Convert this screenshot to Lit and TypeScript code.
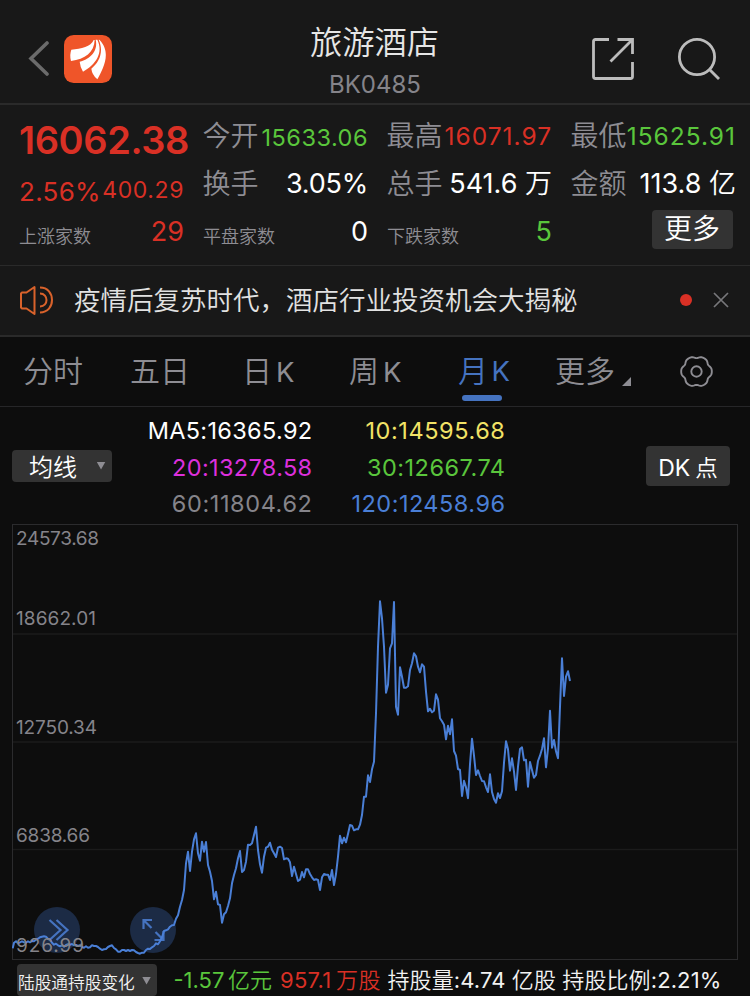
import { LitElement, html, css, svg } from "lit";
import { customElement } from "lit/decorators.js";

/* Monthly closes, one sample every 2px. Offsets are thirds of a pixel below each base line. */
const EARLY_BASE = 800;
const EARLY = [
  428, 424, 430, 427, 424, 427, 428, 424, 427, 423, 424, 419, 416, 412, 410, 409, 410, 417, 419, 428, 434, 431, 436,
  439, 436, 440, 435, 433, 434, 432, 436, 435, 438, 436, 441, 443, 439, 443, 442, 436, 438, 438, 441, 446, 450, 448,
  447, 441, 438, 436, 444, 448, 455, 455, 450, 450, 453, 450, 453, 450, 451, 456, 459, 461, 458, 458, 450, 446, 447,
  442, 438, 430, 433, 424, 412, 393, 391, 388, 380, 376, 375, 356, 346, 320, 300, 270, 190, 155, 213, 155, 118, 100,
  160, 182, 125, 155, 126, 195, 215, 243, 298, 275, 313, 315, 368, 343, 337, 318, 295, 250, 225, 205, 175, 153, 216,
  210, 185, 134, 135, 130, 105, 80, 150, 193, 218, 170, 143, 140, 128, 149, 160, 171, 143, 140, 144, 178, 175, 176,
  187, 228, 200, 222, 243, 239, 216, 232, 208, 208, 222, 232, 240, 238, 240, 270, 232, 222, 224, 224, 240, 210, 255,
  222, 170, 107, 130, 113, 127, 102, 75, 77, 91, 88, 88, 74, 45,
];
const LATE_BASE = 580;
const LATE = [
  650, 650, 586, 606, 568, 545, 400, 200, 64, 115, 200, 338, 314, 205, 190, 66, 380, 404, 262, 290, 323, 323, 319, 270,
  250, 220, 229, 260, 277, 253, 260, 335, 394, 386, 397, 392, 343, 359, 415, 424, 434, 478, 437, 463, 418, 513, 527,
  567, 570, 648, 602, 622, 655, 553, 476, 527, 585, 571, 588, 603, 604, 622, 636, 583, 636, 657, 668, 640, 654, 634,
  548, 484, 508, 572, 535, 575, 630, 560, 507, 502, 541, 539, 620, 546, 570, 593, 585, 543, 527, 507, 475, 562, 505,
  392, 503, 480, 514, 535, 380, 235, 348, 290, 274, 303,
];
const LINE = [
  "12.7,948.3",
  ...[...EARLY.map((v) => EARLY_BASE + v / 3), ...LATE.map((v) => LATE_BASE + v / 3)].map(
    (y, i) => `${14 + i * 2},${y.toFixed(1)}`
  ),
].join(" ");

const AXIS: [string, number, number][] = [
  ["24573.68", 545, 83],
  ["18662.01", 625, 80],
  ["12750.34", 733.5, 81],
  ["6838.66", 841.5, 74],
  ["926.99", 952, 68],
];

/* Six-lobed outline of the settings icon */
const GEAR = (() => {
  const pts: string[] = [];
  for (let i = 0; i < 120; i++) {
    const a = (i / 120) * Math.PI * 2;
    const r = 15.3 - 1.9 * Math.pow((1 - Math.cos(a * 6)) / 2, 2);
    pts.push(`${(16.5 + r * Math.cos(a)).toFixed(2)},${(16.5 + r * Math.sin(a)).toFixed(2)}`);
  }
  return pts.join(" ");
})();

@customElement("quote-header")
class QuoteHeader extends LitElement {
  static styles = css`
    :host {
      display: flex;
      height: 103px;
      border-bottom: 2px solid #2a2a2a;
    }
    .side {
      width: 188px;
      display: flex;
      align-items: flex-start;
      box-sizing: border-box;
    }
    .left {
      padding: 35px 0 0 28px;
      gap: 15px;
    }
    .right {
      padding: 36px 0 0 28px;
      gap: 41px;
    }
    .mid {
      flex: 1;
      text-align: center;
      padding-top: 20px;
    }
    .name {
      font-size: 32.3px;
      line-height: 46px;
      color: #e6e6e6;
      font-weight: 350;
      margin-left: -1px;
    }
    .code {
      font-size: 24px;
      line-height: 37px;
      color: #85848a;
    }
    svg {
      display: block;
    }
  `;
  render() {
    return html`
      <div class="side left">
        <svg width="21" height="48" viewBox="0 0 21 48">
          <path d="M19 8 3 23.500 19 39" fill="none" stroke="#6b6b6b" stroke-width="3.600" stroke-linecap="round" />
        </svg>
        <svg width="48" height="48" viewBox="192 105 144 144">
          <rect x="192" y="105" width="144" height="144" rx="29" fill="#ef5529" />
          <g fill="#fff">
            <path d="M281 120C273 140 244 147 214 149Q208 165 213 183C255 178 283 157 284 120Z" />
            <path d="M287 119C295 153 271 177 239 185Q240 199 249 215C288 193 311 158 292 119Z" />
            <path d="M296 119C312 153 299 187 274 206Q276 224 292 238C308 208 337 158 298 119Z" />
          </g>
        </svg>
      </div>
      <div class="mid">
        <div class="name">旅游酒店</div>
        <div class="code">BK0485</div>
      </div>
      <div class="side right">
        <svg width="46" height="46" viewBox="0 0 46 46" fill="none" stroke="#bcbcbc" stroke-width="2.800">
          <path d="M19 3.500H5.500Q3.500 3.500 3.500 5.500V40.500Q3.500 42.500 5.500 42.500H40.500Q42.500 42.500 42.500 40.500V26" />
          <path d="M27.500 3.500H42.500V18M42 4 20.500 25.500" />
        </svg>
        <svg width="46" height="46" viewBox="0 0 46 46" fill="none" stroke="#bcbcbc" stroke-width="2.800">
          <circle cx="20" cy="21" r="17.600" />
          <path d="M32.500 33.500 42 43" />
        </svg>
      </div>
    `;
  }
}

@customElement("quote-summary")
class QuoteSummary extends LitElement {
  static styles = css`
    :host {
      display: grid;
      grid-template-columns: repeat(4, 165px);
      grid-template-rows: 55px 41px 55px;
      column-gap: 19px;
      padding: 3px 0 4px 19px;
      height: 153px;
      border-bottom: 1px solid #2a2a2a;
      white-space: nowrap;
    }
    .cell {
      display: flex;
      justify-content: space-between;
      align-items: center;
      line-height: 40px;
      font-size: 27px;
      color: #fff;
    }
    .lab {
      font-size: 28px;
      color: #8e8d93;
      font-weight: 350;
      margin-left: -0.5px;
    }
    .small {
      font-size: 18px;
      padding-top: 11px;
      margin-left: 0;
    }
    .price {
      font-size: 38px;
      font-weight: 600;
      letter-spacing: -0.4px;
      padding-top: 8px;
    }
    .open {
      font-size: 23.5px;
      letter-spacing: 0.5px;
      padding-top: 5px;
    }
    .val {
      font-size: 24.5px;
      letter-spacing: 1px;
    }
    .turn {
      letter-spacing: -0.2px;
    }
    .pct {
      font-size: 26px;
      letter-spacing: 0.3px;
      padding-top: 16px;
    }
    .chg {
      font-size: 23px;
      letter-spacing: 0.6px;
      padding-top: 12px;
    }
    .unit {
      font-weight: 350;
    }
    .red {
      color: #d93025;
    }
    .green {
      color: #5ac63c;
    }
    .more {
      justify-self: end;
      width: 81px;
      height: 39px;
      box-sizing: border-box;
      border-radius: 4px;
      background: #333;
      color: #fff;
      font-size: 28px;
      font-weight: 350;
      line-height: 38px;
      text-align: center;
      text-indent: -1px;
      margin: 6px 3px 0 0;
    }
  `;
  render() {
    return html`
      <div class="cell"><span class="price red">16062.38</span></div>
      <div class="cell"><span class="lab">今开</span><span class="open green">15633.06</span></div>
      <div class="cell"><span class="lab">最高</span><span class="val red">16071.97</span></div>
      <div class="cell"><span class="lab">最低</span><span class="val green">15625.91</span></div>
      <div class="cell"><span class="pct red">2.56%</span><span class="chg red">400.29</span></div>
      <div class="cell"><span class="lab">换手</span><span class="turn">3.05%</span></div>
      <div class="cell"><span class="lab">总手</span><span>541.6 <span class="unit">万</span></span></div>
      <div class="cell"><span class="lab">金额</span><span>113.8 <span class="unit">亿</span></span></div>
      <div class="cell"><span class="lab small">上涨家数</span><span class="red">29</span></div>
      <div class="cell"><span class="lab small">平盘家数</span><span>0</span></div>
      <div class="cell"><span class="lab small">下跌家数</span><span class="green">5</span></div>
      <div class="more">更多</div>
    `;
  }
}

@customElement("news-bar")
class NewsBar extends LitElement {
  static styles = css`
    :host {
      display: flex;
      align-items: center;
      height: 67px;
      border-bottom: 2px solid #2a2a2a;
      padding: 0 20px 2px 18px;
    }
    .text {
      flex: 1;
      margin-left: 20px;
      font-size: 26.5px;
      line-height: 40px;
      color: #e2e2e2;
      font-weight: 350;
      white-space: nowrap;
    }
    .dot {
      width: 12px;
      height: 12px;
      border-radius: 50%;
      background: #d93025;
      margin-right: 20px;
    }
  `;
  render() {
    return html`
      <svg width="36" height="32" viewBox="0 0 36 32" fill="none" stroke="#d9622b" stroke-width="2">
        <path d="M3 9.500 4 8.500H8.500L16.500 3V30L8.500 24.500H4L3 23.500Z" stroke-linejoin="round" />
        <path d="M22 3.500C30 3.500 34 9.500 34 16S30 28.500 22 28.500M22 9.500C26.500 9.500 28.500 13 28.500 16S26.500 22.500 22 22.500" />
      </svg>
      <span class="text">疫情后复苏时代，酒店行业投资机会大揭秘</span>
      <span class="dot"></span>
      <svg width="18" height="18" viewBox="0 0 18 18" stroke="#77777a" stroke-width="1.700">
        <path d="M2 2 16 16M16 2 2 16" />
      </svg>
    `;
  }
}

@customElement("period-tabs")
class PeriodTabs extends LitElement {
  static styles = css`
    :host {
      display: grid;
      grid-template-columns: 107px 112px 107px 109px 97px 125px 34px;
      padding-left: 23px;
      height: 69px;
      border-bottom: 1px solid #262628;
      background: #0d0d0d;
      color: #8e8d93;
      font-size: 30px;
      line-height: 68px;
      font-weight: 350;
      white-space: nowrap;
    }
    .k {
      margin-left: 4px;
      font-size: 27.5px;
      font-weight: 400;
    }
    .active {
      display: flex;
      position: relative;
      color: #4573c0;
    }
    .active .k {
      margin-left: 3.5px;
    }
    .bar {
      position: absolute;
      left: 4px;
      bottom: 5px;
      width: 40px;
      height: 6px;
      border-radius: 3px;
      background: #4573c0;
    }
    .more {
      display: flex;
    }
    .corner {
      width: 9px;
      height: 9px;
      background: #8e8d93;
      clip-path: polygon(100% 0, 100% 100%, 0 100%);
      margin: 40px 0 0 7px;
    }
    .gear {
      margin-top: 17.5px;
    }
  `;
  render() {
    return html`
      <span>分时</span>
      <span>五日</span>
      <span>日<span class="k">K</span></span>
      <span>周<span class="k">K</span></span>
      <span class="active">月<span class="k">K</span><i class="bar"></i></span>
      <span class="more">更多<i class="corner"></i></span>
      <svg class="gear" width="33" height="33" viewBox="0 0 33 33" fill="none" stroke="#8e8d93" stroke-width="1.900">
        <polygon points=${GEAR} stroke-linejoin="round" />
        <circle cx="16.500" cy="16.500" r="5.200" />
      </svg>
    `;
  }
}

@customElement("ma-panel")
class MaPanel extends LitElement {
  static styles = css`
    :host {
      display: grid;
      grid-template-columns: 100px 200px 193px 1fr;
      padding: 0 20px 0 12px;
      height: 117px;
      align-items: center;
      background: #0d0d0d;
    }
    .col {
      text-align: right;
      font-size: 23.5px;
      line-height: 36.5px;
      padding-top: 5px;
      margin-right: -0.5px;
    }
    .btn {
      display: flex;
      align-items: center;
      justify-content: space-between;
      box-sizing: border-box;
      border-radius: 4px;
      background: #333;
      color: #fff;
      font-size: 24px;
      white-space: nowrap;
    }
    .cjk {
      font-weight: 350;
    }
    .select {
      height: 32px;
      padding: 0 6.5px 0 17px;
    }
    .dk {
      justify-self: end;
      width: 84px;
      height: 40px;
      justify-content: center;
      font-size: 23px;
      word-spacing: -1.5px;
    }
    .dk .cjk {
      font-size: 22.5px;
    }
    .tri {
      width: 9px;
      height: 8px;
      background: #8e8d93;
      clip-path: polygon(0 0, 100% 0, 50% 100%);
    }
    .white {
      color: #fff;
      letter-spacing: 0.33px;
    }
    .yellow {
      color: #f2e266;
      letter-spacing: 0.58px;
    }
    .pink {
      color: #dc30dc;
      letter-spacing: 0.35px;
    }
    .green {
      color: #5ac63c;
      letter-spacing: 0.5px;
    }
    .grey {
      color: #85848a;
      letter-spacing: 0.6px;
    }
    .blue {
      color: #4a7fd6;
      letter-spacing: 0.48px;
    }
  `;
  render() {
    return html`
      <div class="btn select"><span class="cjk">均线</span><i class="tri"></i></div>
      <div class="col">
        <div class="white">MA5:16365.92</div>
        <div class="pink">20:13278.58</div>
        <div class="grey">60:11804.62</div>
      </div>
      <div class="col">
        <div class="yellow">10:14595.68</div>
        <div class="green">30:12667.74</div>
        <div class="blue">120:12458.96</div>
      </div>
      <div class="btn dk"><span>DK <span class="cjk">点</span></span></div>
    `;
  }
}

@customElement("price-chart")
class PriceChart extends LitElement {
  static styles = css`
    :host {
      display: block;
      background: #0d0d0d;
      height: 436px;
      padding-left: 12px;
    }
    svg {
      display: block;
    }
    .axis {
      font: 19px Inter, sans-serif;
      fill: #85848a;
    }
    .line {
      fill: none;
      stroke: #4a7fd6;
      stroke-width: 2;
      stroke-linejoin: round;
    }
    .tool {
      fill: #1c2b45;
    }
    .glyph {
      fill: none;
      stroke: #4573c0;
      stroke-width: 2.2;
    }
  `;
  render() {
    return html`
      <svg width="726" height="436" viewBox="12 524 726 436">
        <rect x="12.500" y="524.500" width="725" height="435" fill="none" stroke="#2b2b2d" />
        <path d="M13 634H737M13 742H737M13 849.500H737" stroke="#1b1b1b" stroke-width="1.500" />
        <circle class="tool" cx="57" cy="930" r="23" />
        <circle class="tool" cx="153" cy="930" r="23" />
        <path class="glyph" d="M49.500 920 60.500 930 49.500 940M56.500 920 67.500 930 56.500 940" />
        <path class="glyph" d="M143.500 929V920H152M143.500 920 151.500 928M155.500 932 163.500 940M154.500 940H163.500V931" />
        <polyline class="line" points=${LINE} />
        ${AXIS.map(
          ([label, y, w]) => svg`<text class="axis" x="16" y=${y} textLength=${w}>${label}</text>`
        )}
      </svg>
    `;
  }
}

@customElement("holding-bar")
class HoldingBar extends LitElement {
  static styles = css`
    :host {
      display: flex;
      height: 36px;
      padding-left: 17px;
      align-items: flex-start;
      background: #0d0d0d;
      white-space: nowrap;
      font-size: 22px;
      line-height: 41px;
      color: #f2f2f2;
      overflow: hidden;
    }
    .select {
      display: flex;
      align-items: center;
      justify-content: space-between;
      box-sizing: border-box;
      width: 140px;
      height: 32px;
      margin: 4px 16.5px 0 0;
      padding: 6px 6px 0 1px;
      border-radius: 4px;
      background: #333;
      font-size: 16.7px;
      line-height: 30px;
    }
    .tri {
      width: 9px;
      height: 8px;
      margin-bottom: 5px;
      background: #8e8d93;
      clip-path: polygon(0 0, 100% 0, 50% 100%);
    }
    .cjk {
      font-weight: 350;
    }
    .green {
      width: 106.5px;
      color: #5ac63c;
      word-spacing: -2.5px;
    }
    .red {
      width: 107.5px;
      color: #d93025;
      letter-spacing: 0.3px;
      word-spacing: -2px;
    }
    .hold {
      letter-spacing: 0.1px;
    }
  `;
  render() {
    const c = (t: string) => html`<span class="cjk">${t}</span>`;
    return html`
      <div class="select">${c("陆股通持股变化")}<i class="tri"></i></div>
      <span class="green">-1.57 ${c("亿元")}</span>
      <span class="red">957.1 ${c("万股")}</span>
      <span class="hold">${c("持股量")}:4.74 ${c("亿股 持股比例")}:2.21%</span>
    `;
  }
}

@customElement("app-root")
class AppRoot extends LitElement {
  static styles = css`
    :host {
      display: flex;
      flex-direction: column;
      width: 750px;
      height: 996px;
      overflow: hidden;
      background: #181818;
      font-family: Inter, "Noto Sans CJK SC", sans-serif;
    }
  `;
  render() {
    return html`
      <quote-header></quote-header>
      <quote-summary></quote-summary>
      <news-bar></news-bar>
      <period-tabs></period-tabs>
      <ma-panel></ma-panel>
      <price-chart></price-chart>
      <holding-bar></holding-bar>
    `;
  }
}
